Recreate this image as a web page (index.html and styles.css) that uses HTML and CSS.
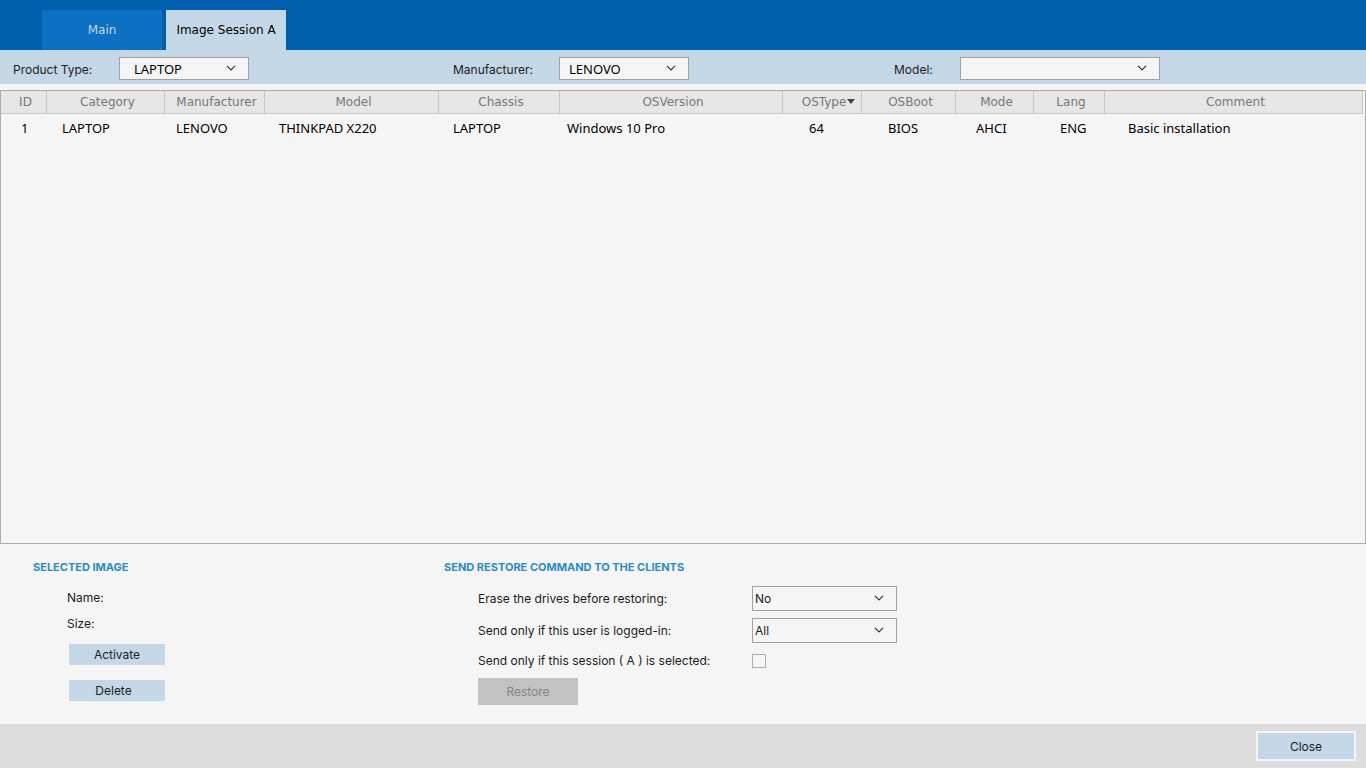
FILE: index.html
```html
<!DOCTYPE html>
<html lang="en">
<head>
<meta charset="utf-8">
<title>Image Session A</title>
<meta name="viewport" content="width=device-width, initial-scale=1">
<link rel="stylesheet" href="styles.css">
</head>
<body>
<div class="app">
  <nav class="tabs" aria-label="Sessions">
    <button type="button" class="tab">Main</button>
    <button type="button" class="tab tab-active" aria-current="page">Image Session A</button>
  </nav>

  <form class="filters">
    <div class="filter">
      <label class="filter-label" for="product-type">Product Type:</label>
      <div class="select select-type">
        <select id="product-type"><option>LAPTOP</option></select>
        <svg class="chevron" viewBox="0 0 10 6" aria-hidden="true"><path d="M1 .8 5 4.8 9 .8"/></svg>
      </div>
    </div>
    <div class="filter">
      <label class="filter-label" for="manufacturer">Manufacturer:</label>
      <div class="select select-maker">
        <select id="manufacturer"><option>LENOVO</option></select>
        <svg class="chevron" viewBox="0 0 10 6" aria-hidden="true"><path d="M1 .8 5 4.8 9 .8"/></svg>
      </div>
    </div>
    <div class="filter">
      <label class="filter-label filter-label-short" for="model">Model:</label>
      <div class="select select-model">
        <select id="model"><option></option></select>
        <svg class="chevron" viewBox="0 0 10 6" aria-hidden="true"><path d="M1 .8 5 4.8 9 .8"/></svg>
      </div>
    </div>
  </form>

  <main class="images">
    <table class="image-table">
      <colgroup>
        <col class="col-id"><col class="col-category"><col class="col-maker"><col class="col-model"><col class="col-chassis"><col class="col-version"><col class="col-type"><col class="col-boot"><col class="col-mode"><col class="col-lang"><col>
      </colgroup>
      <thead>
        <tr>
          <th>ID</th><th>Category</th><th>Manufacturer</th><th>Model</th><th>Chassis</th><th>OSVersion</th>
          <th class="sorted" aria-sort="descending">OSType<svg class="sort" viewBox="0 0 8 5" aria-hidden="true"><path d="M0 0h8L4 5z"/></svg></th>
          <th>OSBoot</th><th>Mode</th><th>Lang</th><th>Comment</th>
        </tr>
      </thead>
      <tbody>
        <tr>
          <td class="cell-id">1</td><td>LAPTOP</td><td class="cell-maker">LENOVO</td><td class="cell-model">THINKPAD X220</td><td class="cell-model">LAPTOP</td><td class="cell-version">Windows 10 Pro</td><td class="cell-wide">64</td><td class="cell-wide">BIOS</td><td class="cell-id">AHCI</td><td class="cell-wide">ENG</td><td class="cell-comment">Basic installation</td>
        </tr>
      </tbody>
    </table>
  </main>

  <div class="panels">
    <section class="selected">
      <h2>SELECTED IMAGE</h2>
      <div class="selected-body">
        <p>Name:</p>
        <p>Size:</p>
        <button type="button" class="button">Activate</button>
        <button type="button" class="button button-delete">Delete</button>
      </div>
    </section>
    <section class="restore">
      <h2>SEND RESTORE COMMAND TO THE CLIENTS</h2>
      <form class="restore-body">
        <label for="erase">Erase the drives before restoring:</label>
        <div class="select select-option">
          <select id="erase"><option>No</option></select>
          <svg class="chevron" viewBox="0 0 10 6" aria-hidden="true"><path d="M1 .8 5 4.8 9 .8"/></svg>
        </div>
        <label for="user">Send only if this user is logged-in:</label>
        <div class="select select-option">
          <select id="user"><option>All</option></select>
          <svg class="chevron" viewBox="0 0 10 6" aria-hidden="true"><path d="M1 .8 5 4.8 9 .8"/></svg>
        </div>
        <label for="session">Send only if this session ( A ) is selected:</label>
        <input class="check" type="checkbox" id="session">
        <button type="button" class="button button-restore" disabled>Restore</button>
      </form>
    </section>
  </div>

  <footer class="footer">
    <button type="button" class="button button-close">Close</button>
  </footer>
</div>
</body>
</html>
```

FILE: styles.css
```css
* { box-sizing: border-box; }

body {
  margin: 0;
  background: #f5f5f5;
  color: #1c1c1c;
  font: 12px/16px "Century Gothic", Inter, sans-serif;
}

button, select { font: inherit; color: inherit; }
button { border: 0; padding: 0; }
h2, p { margin: 0; }

.app {
  display: flex;
  flex-direction: column;
  min-height: 100vh;
}

.tabs {
  display: flex;
  gap: 4px;
  padding: 10px 42px 0;
  background: #005fac;
}

.tab {
  width: 120px;
  height: 40px;
  background: #0c70c3;
  color: #c4d6e5;
  font: 12px/16px "DejaVu Sans", sans-serif;
}

.tab-active { background: #c4d7e6; color: #000; }

.filters {
  display: grid;
  grid-template-columns: 440px 441px 1fr;
  height: 34px;
  padding: 7px 0 0 13px;
  background: #c4d7e6;
}

.filter { display: flex; align-items: flex-start; }
.filter-label { width: 106px; padding-top: 5px; }
.filter-label-short { width: 66px; }

.select {
  display: grid;
  align-items: center;
  height: 23px;
}

.select > * { grid-area: 1 / 1; }

.select select {
  appearance: none;
  width: 100%;
  height: 100%;
  border: 1px solid #a0a0a0;
  border-radius: 0;
  background: #f5f5f5;
  padding: 0 28px 0 9px;
}

.select-type, .select-maker { width: 130px; }
.select-model { width: 200px; }
.select-type select, .select-maker select {
  color: #000;
  font: 13px/18px "Noto Sans", sans-serif;
}
.select-type select { padding-left: 14px; }
.select-option { width: 145px; height: 25px; }
.select-option select { padding-left: 2px; }

.chevron {
  justify-self: end;
  width: 10px;
  height: 6px;
  margin: 0 13px 1px 0;
  fill: none;
  stroke: #333;
  stroke-width: 1.2;
  pointer-events: none;
}

.images {
  flex: 1;
  margin-top: 6px;
  padding-right: 2px;
  border: 1px solid #acacac;
}

.image-table {
  width: 100%;
  table-layout: fixed;
  border-collapse: separate;
  border-spacing: 0;
}

.col-id { width: 46px; }
.col-category { width: 118px; }
.col-maker { width: 100px; }
.col-model { width: 174px; }
.col-chassis { width: 121px; }
.col-version { width: 223px; }
.col-type { width: 79px; }
.col-boot { width: 94px; }
.col-mode { width: 78px; }
.col-lang { width: 71px; }

.image-table th {
  height: 23px;
  padding: 0 0 0 4px;
  border-right: 1px solid #c8c8c8;
  border-bottom: 1px solid #c8c8c8;
  background: #e6e6e6;
  color: #777;
  font: 12px/16px "DejaVu Sans", sans-serif;
  white-space: nowrap;
}

.image-table th.sorted { padding-left: 13px; }

.sort {
  width: 8px;
  height: 5px;
  margin-left: 1px;
  vertical-align: 2px;
  fill: #444;
}

.image-table td {
  height: 28px;
  padding: 0 0 0 15px;
  color: #000;
  font: 13px/18px "Noto Sans", sans-serif;
  white-space: nowrap;
}

.image-table .cell-id { padding-left: 20px; }
.image-table .cell-maker { padding-left: 11px; }
.image-table .cell-model { padding-left: 14px; }
.image-table .cell-version { padding-left: 7px; }
.image-table .cell-wide { padding-left: 26px; }
.image-table .cell-comment { padding-left: 23px; }

.panels {
  display: grid;
  grid-template-columns: 411px 1fr;
  height: 180px;
  padding: 15px 33px 0;
}

h2 {
  color: #2a8bc9;
  font-size: 11px;
  line-height: 16px;
}

.selected-body {
  display: flex;
  flex-direction: column;
  gap: 10px;
  padding: 15px 34px 0;
}

.button {
  width: 96px;
  height: 21px;
  background: #c4d7e6;
}

.selected-body .button { margin: 2px 2px 0; }
.selected-body .button-delete { margin-top: 5px; padding-right: 7px; }

.restore-body {
  display: grid;
  grid-template-columns: 274px 1fr;
  grid-template-rows: 25px 25px 21px 27px;
  row-gap: 7px;
  align-items: center;
  padding: 11px 34px 0;
}

.check {
  appearance: none;
  width: 14px;
  height: 14px;
  margin: 0;
  border: 1px solid #b0aca8;
  background: #f5f5f5;
}

.button-restore {
  width: 100px;
  height: 27px;
  background: #c2c2c2;
  color: #858585;
}

.footer {
  display: flex;
  justify-content: flex-end;
  padding: 7px 10px;
  background: #ddd;
}

.button-close {
  width: 100px;
  height: 30px;
  padding-top: 1px;
  border: 2px solid #f5f5f5;
}
```
